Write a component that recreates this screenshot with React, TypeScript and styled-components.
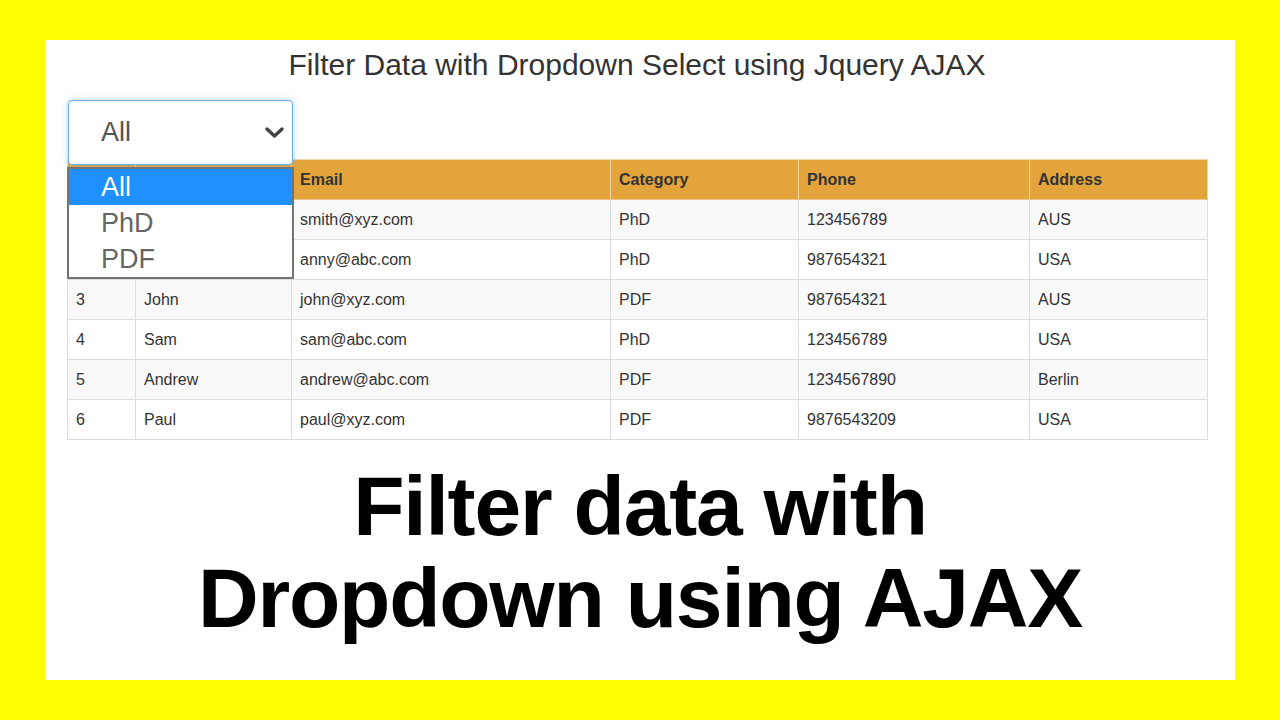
import React from "react";
import styled, { createGlobalStyle } from "styled-components";

const Global = createGlobalStyle`
  html, body { margin: 0; padding: 0; }
  body {
    background: #ffff00;
    font-family: "Liberation Sans", Arial, sans-serif;
    width: 1280px;
    height: 720px;
    overflow: hidden;
  }
  * { box-sizing: border-box; }
`;

const Frame = styled.div`
  padding: 40px 45px;
`;

const Panel = styled.main`
  width: 1190px;
  height: 640px;
  background: #ffffff;
  padding-top: 8px;
  display: flex;
  flex-direction: column;
`;

const Title = styled.h1`
  margin: 0;
  padding-right: 6px;
  font-size: 30px;
  line-height: 34px;
  font-weight: 400;
  color: #333333;
  text-align: center;
`;

const Content = styled.section`
  padding-left: 22px;
`;

const SelectArea = styled.div`
  position: relative;
  z-index: 2;
  margin-top: 18px;
  height: 59px;
`;

const SelectBox = styled.div`
  width: 225px;
  height: 65px;
  margin-left: 1px;
  background: #ffffff;
  border: 1px solid #66afe9;
  border-radius: 4px;
  box-shadow: 0 0 6px rgba(102, 175, 233, 0.55), inset 0 1px 1px rgba(0, 0, 0, 0.06);
  display: flex;
  align-items: center;
  justify-content: space-between;
  padding: 0 8px 0 32px;
  font-size: 27px;
  color: #555555;
`;

const Chevron = styled.svg`
  width: 19px;
  height: 11px;
  display: block;
`;

const OptionList = styled.ul`
  position: absolute;
  left: 0;
  top: 67px;
  width: 227px;
  margin: 0;
  padding: 0;
  list-style: none;
  background: #ffffff;
  border: 2px solid #747474;
`;

const OptionItem = styled.li<{ $active?: boolean }>`
  height: 36px;
  line-height: 36px;
  padding-left: 32px;
  font-size: 27px;
  color: ${(p) => (p.$active ? "#ffffff" : "#666666")};
  background: ${(p) => (p.$active ? "#1e90ff" : "#ffffff")};
`;

const Table = styled.table`
  width: 1140px;
  border-collapse: collapse;
  table-layout: fixed;
  font-size: 16px;
  color: #333333;
`;

const HeadCell = styled.th`
  background: #e3a43b;
  text-align: left;
  font-weight: 700;
  padding: 8px;
  line-height: 23px;
  border: 1px solid #efd4a6;
  border-bottom-color: #e8c58a;
  color: #333333;
`;

const Row = styled.tr<{ $striped: boolean }>`
  background: ${(p) => (p.$striped ? "#f9f9f9" : "#ffffff")};
`;

const Cell = styled.td`
  padding: 8px;
  line-height: 23px;
  border: 1px solid #dddddd;
  white-space: nowrap;
`;

const BigText = styled.p`
  margin: 20px 0 0;
  text-align: center;
  font-size: 84px;
  line-height: 92px;
  font-weight: 700;
  letter-spacing: -1.2px;
  color: #000000;
`;

// The first two columns of the header and first two rows lie under the open
// dropdown list, so their text is not visible in the screenshot.
const rows = [
  ["", "", "smith@xyz.com", "PhD", "123456789", "AUS"],
  ["", "", "anny@abc.com", "PhD", "987654321", "USA"],
  ["3", "John", "john@xyz.com", "PDF", "987654321", "AUS"],
  ["4", "Sam", "sam@abc.com", "PhD", "123456789", "USA"],
  ["5", "Andrew", "andrew@abc.com", "PDF", "1234567890", "Berlin"],
  ["6", "Paul", "paul@xyz.com", "PDF", "9876543209", "USA"],
];

const widths = [68, 156, 319, 188, 231, 178];
const headers = ["", "", "Email", "Category", "Phone", "Address"];

export default function App() {
  return (
    <>
      <Global />
      <Frame>
        <Panel>
          <Title>Filter Data with Dropdown Select using Jquery AJAX</Title>
          <Content>
            <SelectArea>
              <SelectBox>
                <span>All</span>
                <Chevron viewBox="0 0 19 11">
                  <path d="M2 2 L9.5 9 L17 2" fill="none" stroke="#444" strokeWidth="3.4" strokeLinecap="round" strokeLinejoin="round" />
                </Chevron>
              </SelectBox>
              <OptionList>
                <OptionItem $active>All</OptionItem>
                <OptionItem>PhD</OptionItem>
                <OptionItem>PDF</OptionItem>
              </OptionList>
            </SelectArea>
            <Table>
              <colgroup>
                {widths.map((w, i) => (
                  <col key={i} style={{ width: w }} />
                ))}
              </colgroup>
              <thead>
                <tr>
                  {headers.map((h, i) => (
                    <HeadCell key={i}>{h}</HeadCell>
                  ))}
                </tr>
              </thead>
              <tbody>
                {rows.map((r, i) => (
                  <Row key={i} $striped={i % 2 === 0}>
                    {r.map((c, j) => (
                      <Cell key={j}>{c}</Cell>
                    ))}
                  </Row>
                ))}
              </tbody>
            </Table>
          </Content>
          <BigText>
            Filter data with
            <br />
            Dropdown using AJAX
          </BigText>
        </Panel>
      </Frame>
    </>
  );
}
